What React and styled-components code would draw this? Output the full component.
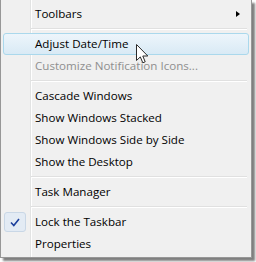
import React from "react";
import styled, { createGlobalStyle } from "styled-components";

const Global = createGlobalStyle`
  html, body { margin: 0; padding: 0; background: #ffffff; }
  body { font-family: "Open Sans", "Noto Sans", "Liberation Sans", sans-serif; }
`;

const Page = styled.div`
  position: relative;
  width: 256px;
  height: 262px;
  overflow: hidden;
`;

const Menu = styled.div`
  box-sizing: border-box;
  width: 252px;
  padding: 3px 0 2px 0;
  border: 1px solid #979797;
  border-top: none;
  background:
    linear-gradient(
      to right,
      transparent 29px,
      #e2e3e3 29px,
      #e2e3e3 30px,
      #ffffff 30px,
      #ffffff 31px,
      transparent 31px
    ),
    #f0f0f0;
  box-shadow: 3px 3px 2px rgba(0, 0, 0, 0.5);
  display: flex;
  flex-direction: column;
`;

const Item = styled.div`
  box-sizing: border-box;
  height: 22px;
  margin: 0 2px;
  display: flex;
  align-items: center;
  border: 1px solid ${(p) => (p.$hot ? "#aad8ec" : "transparent")};
  border-radius: 3px;
  background: ${(p) =>
    p.$hot ? "linear-gradient(to bottom, #edf5fb, #d9eaf5)" : "transparent"};
  font-size: 11.6px;
  color: ${(p) => (p.$disabled ? "#8f8f8f" : "#000000")};
  white-space: nowrap;
`;

const IconCell = styled.div`
  width: 31px;
  height: 100%;
  flex: none;
  display: flex;
  align-items: center;
`;

const CheckBox = styled.div`
  box-sizing: border-box;
  width: 22px;
  height: 20px;
  border: 1px solid #c9d7e6;
  border-radius: 3px;
  background: #e3ebf4;
  display: flex;
  align-items: center;
  justify-content: center;
`;

const Label = styled.span`
  flex: 1;
  line-height: 20px;
`;

const Arrow = styled.span`
  width: 0;
  height: 0;
  margin-right: 8px;
  border-top: 3.5px solid transparent;
  border-bottom: 3.5px solid transparent;
  border-left: 4px solid #000000;
`;

const Separator = styled.div`
  height: 8px;
  margin: 0 4px 0 30px;
  background: linear-gradient(
    to bottom,
    transparent 3px,
    #e0e0e0 3px,
    #e0e0e0 4px,
    #ffffff 4px,
    #ffffff 5px,
    transparent 5px
  );
`;

const Cursor = styled.svg`
  position: absolute;
  left: 136px;
  top: 44px;
  width: 13px;
  height: 20px;
`;

function MenuItem({ label, hot, disabled, checked, submenu }) {
  return (
    <Item $hot={hot} $disabled={disabled}>
      <IconCell>
        {checked && (
          <CheckBox>
            <svg width="10" height="9" viewBox="0 0 10 9">
              <polyline
                points="1,4.5 3.8,7.5 9,1"
                fill="none"
                stroke="#1b3f9c"
                strokeWidth="1.6"
              />
            </svg>
          </CheckBox>
        )}
      </IconCell>
      <Label>{label}</Label>
      {submenu && <Arrow />}
    </Item>
  );
}

export default function App() {
  return (
    <Page>
      <Global />
      <Menu>
        <MenuItem label="Toolbars" submenu />
        <Separator />
        <MenuItem label="Adjust Date/Time" hot />
        <MenuItem label="Customize Notification Icons..." disabled />
        <Separator />
        <MenuItem label="Cascade Windows" />
        <MenuItem label="Show Windows Stacked" />
        <MenuItem label="Show Windows Side by Side" />
        <MenuItem label="Show the Desktop" />
        <Separator />
        <MenuItem label="Task Manager" />
        <Separator />
        <MenuItem label="Lock the Taskbar" checked />
        <MenuItem label="Properties" />
      </Menu>
      <Cursor viewBox="0 0 13 20">
        <path
          d="M0.5 0.5 L0.5 16.5 L4.3 12.9 L6.8 18.8 L9.2 17.8 L6.8 12 L11.8 12 Z"
          fill="#ffffff"
          stroke="#2a2a2a"
          strokeWidth="1"
          strokeLinejoin="miter"
        />
      </Cursor>
    </Page>
  );
}
